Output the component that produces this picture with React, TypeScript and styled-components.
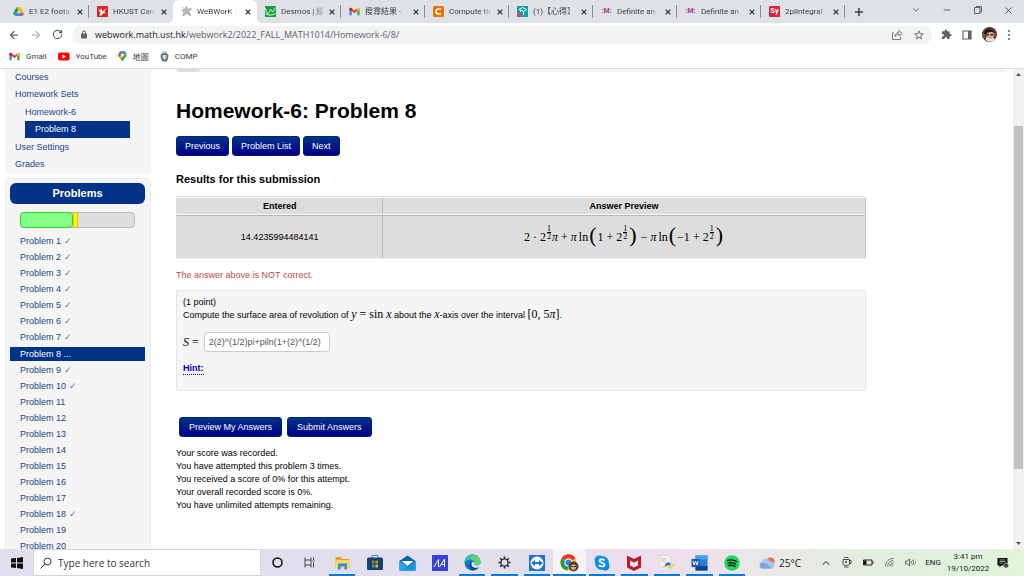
import React from "react";
import styled, { createGlobalStyle, css } from "styled-components";
import { ArrowLeft, ArrowRight, ChevronDown, ChevronUp, Minus, Plus, RotateCw, X } from "lucide-react";
import { MdExtension, MdStarBorder } from "react-icons/md";

const uiFont = `"Open Sans", "Noto Sans CJK TC", sans-serif`;
const smallUiFont = `Roboto, "Noto Sans CJK TC", sans-serif`;
const pageFont = `"Liberation Sans", Arial, sans-serif`;
const mathFont = `"Liberation Serif", "Times New Roman", serif`;

const GlobalStyle = createGlobalStyle`
  * { box-sizing: border-box; }
  body { margin: 0; background: #fff; font-family: ${pageFont}; font-size: 9px; color: #000; }
  button, input { font: inherit; color: inherit; margin: 0; padding: 0; border: 0; background: none; }
  ul { list-style: none; margin: 0; padding: 0; }
  a { color: inherit; text-decoration: none; }
  svg { display: block; flex: none; }
`;

const Screen = styled.div`
  display: flex;
  flex-direction: column;
  height: 100vh;
  overflow: hidden;
`;

/* ---------- browser chrome ---------- */

const TabStrip = styled.div`
  display: flex;
  flex: none;
  height: 23px;
  padding-left: 5px;
  background: #dee1e6;
  font-family: ${smallUiFont};
  font-size: 8px;
  color: #3c4043;
`;

const Tab = styled.div<{ $active?: boolean; $divided?: boolean }>`
  position: relative;
  display: flex;
  align-items: center;
  flex: 0 1 84px;
  min-width: 0;
  padding: 0 5px 0 8px;
  gap: 5px;
  ${(p) =>
    p.$divided &&
    css`
      &::after {
        content: "";
        position: absolute;
        right: 0;
        top: 5px;
        width: 1px;
        height: 13px;
        background: #898c91;
      }
    `}
  ${(p) =>
    p.$active &&
    css`
      background: #fff;
      border-radius: 6px 6px 0 0;
      &::before,
      &::after {
        content: "";
        position: absolute;
        bottom: 0;
        width: 5px;
        height: 5px;
      }
      &::before {
        left: -5px;
        background: radial-gradient(circle at 0 0, transparent 5px, #fff 5px);
      }
      &::after {
        right: -5px;
        background: radial-gradient(circle at 100% 0, transparent 5px, #fff 5px);
      }
    `}
`;

const TabLabel = styled.button`
  flex: 1;
  min-width: 0;
  white-space: nowrap;
  text-align: left;
  line-height: 14px;
  mask-image: linear-gradient(to right, #000 75%, rgba(0, 0, 0, 0.2) 100%);
`;

const IconButton = styled.button`
  display: flex;
  align-items: center;
  justify-content: center;
  flex: none;
`;

const NewTab = styled(IconButton)`
  width: 28px;
`;

const WindowButtons = styled.div`
  display: flex;
  margin-left: auto;
  height: 20px;
`;

const WindowButton = styled(IconButton)`
  width: 31px;
  color: #44474a;
`;

const Toolbar = styled.div`
  display: flex;
  align-items: center;
  flex: none;
  height: 23px;
  padding: 0 13px 0 8px;
  color: #5f6368;
  font-family: ${uiFont};
`;

const NavButtons = styled.div`
  display: flex;
  gap: 10px;
  width: 64px;
`;

const AddressBar = styled.form`
  display: flex;
  align-items: center;
  flex: 1;
  height: 18px;
  padding: 0 7px 0 8px;
  border-radius: 9px;
  background: #f1f3f4;
  font-size: 9px;
`;

const Host = styled.label`
  margin-left: 7px;
  color: #202124;
`;

const PathInput = styled.input`
  flex: 1;
  min-width: 0;
  outline: 0;
`;

const AddressActions = styled.div`
  display: flex;
  gap: 10px;
`;

const ToolbarActions = styled.div`
  display: flex;
  align-items: center;
  gap: 10px;
  padding-left: 9px;
`;

const Bookmarks = styled.nav`
  display: flex;
  align-items: center;
  flex: none;
  gap: 11px;
  height: 23px;
  padding: 0 9px 2px;
  border-bottom: 1px solid #dadce0;
  font-family: ${smallUiFont};
  font-size: 8px;
  color: #3c4043;
`;

const Bookmark = styled.a`
  display: flex;
  align-items: center;
  gap: 6px;
`;

/* ---------- page ---------- */

const Viewport = styled.div`
  display: flex;
  flex: 1;
  min-height: 0;
`;

const Scroller = styled.div`
  display: flex;
  align-items: flex-start;
  flex: 1;
  min-width: 0;
  height: 100%;
  overflow: hidden;
`;

const Sidebar = styled.aside`
  flex: none;
  width: 146px;
  margin-left: 5px;
  color: #1a4590;
`;

const SiteNav = styled.nav`
  padding-right: 21px;
  background: #f5f5f5;
  line-height: 17px;
`;

const NavList = styled.ul<{ $nested?: boolean }>`
  margin: ${(p) => (p.$nested ? "1px 0 1px 10px" : "0")};
`;

const NavLink = styled.a<{ $active?: boolean }>`
  display: block;
  margin-left: ${(p) => (p.$active ? "10px" : "0")};
  padding-left: 10px;
  ${(p) =>
    p.$active &&
    css`
      background: #003388;
      color: #fff;
    `}
`;

const ProblemPanel = styled.section`
  margin-top: 5px;
  padding: 4px 5px 4px 4px;
  border: 1px solid #ececec;
  border-radius: 5px;
  background: #f5f5f5;
`;

const PanelTitle = styled.h2`
  margin: 0;
  border-radius: 6px;
  background: #003388;
  color: #fff;
  font-size: 11px;
  line-height: 21px;
  text-align: center;
`;

const Progress = styled.div`
  display: flex;
  height: 16px;
  margin: 8px 10px 5px;
  border: 1px solid #bbb;
  border-radius: 4px;
  background: #ddd;
`;

const ProgressPart = styled.div<{ $kind: "done" | "tried" }>`
  margin: -1px 0 -1px ${(p) => (p.$kind === "done" ? "-1px" : "0")};
  border: 1px solid ${(p) => (p.$kind === "done" ? "#22e022" : "#ffb000")};
  border-radius: ${(p) => (p.$kind === "done" ? "4px" : "2px")};
  background: ${(p) => (p.$kind === "done" ? "#88ff88" : "#ffff00")};
`;

const ProblemLink = styled.a<{ $active?: boolean }>`
  display: block;
  padding-left: 10px;
  line-height: 16px;
  ${(p) =>
    p.$active &&
    css`
      margin: 2px 0 1px;
      background: #003388;
      color: #fff;
      line-height: 14px;
    `}
`;

const Check = styled.span`
  color: #5a74a6;
`;

const Main = styled.main`
  flex: 1;
  min-width: 0;
  padding: 0 6px 0 25px;
`;

const Breadcrumb = styled.div`
  height: 3px;
  overflow: hidden;
  border-radius: 0 0 4px 4px;
  background: #f5f5f5;
`;

const BreadcrumbToggle = styled.div`
  width: 24px;
  height: 3px;
  border-radius: 0 0 4px 4px;
  background: #dedede;
`;

const Title = styled.h1`
  margin: 27px 0 13px;
  font-size: 21px;
  line-height: 24px;
`;

const ButtonRow = styled.div<{ $gap: number; $inset?: boolean }>`
  display: flex;
  gap: ${(p) => p.$gap}px;
  padding-left: ${(p) => (p.$inset ? "3px" : "0")};
`;

const BlueButton = styled.button<{ $pad: number }>`
  height: 20px;
  padding: 0 ${(p) => p.$pad}px;
  border: 1px solid #00246b;
  border-radius: 3px;
  background: linear-gradient(#003388, #000088);
  color: #fff;
`;

const SectionTitle = styled.h3`
  margin: 16px 0 10px;
  font-size: 11px;
  line-height: 14px;
`;

const ResultTable = styled.table`
  width: 83%;
  border: 1px solid;
  border-color: #e0e0e0 #c4c4c4 #f0f0f0 #e0e0e0;
  border-radius: 2px;
  border-spacing: 0;
  border-collapse: separate;
  background: #ddd;
  text-align: center;

  th {
    height: 18px;
    padding: 0;
    border: solid #fafafa;
    border-width: 1px 0;
  }
  td {
    height: 43px;
    padding: 0;
    border-top: 1px solid #b5b5b5;
  }
  th:first-child,
  td:first-child {
    width: 30%;
    border-right: 1px solid #bbb;
  }
`;

const Warning = styled.p`
  margin: 10px 0 8px;
  color: #b94a48;
  line-height: 13px;
`;

const ProblemBox = styled.section`
  width: 83%;
  min-height: 101px;
  padding: 5px 6px;
  border: 1px solid #e6e6e6;
  border-radius: 2px;
  background: #f5f5f5;
  line-height: 13px;
`;

const Line = styled.p`
  margin: 0;
  line-height: 13px;
`;

const AnswerRow = styled.div`
  display: flex;
  align-items: center;
  gap: 2px;
  margin: 8px 0;
`;

const AnswerInput = styled.input`
  width: 126px;
  height: 20px;
  padding: 0 4px;
  border: 1px solid #ccc;
  border-radius: 3px;
  background: #fff;
  color: #555;
`;

const HintLink = styled.a`
  display: inline-block;
  border-bottom: 1px dotted #0000aa;
  color: #0000aa;
  font-weight: bold;
  line-height: 12px;
`;

const Actions = styled.div`
  margin: 26px 0 10px;
`;

/* ---------- mathematics ---------- */

const MathRow = styled.span`
  display: inline-flex;
  align-items: center;
  height: 24px;
  font-family: ${mathFont};
  font-size: 12px;
  line-height: 14px;
`;

const MathText = styled.span`
  font-family: ${mathFont};
  font-size: 12px;
  line-height: 10px;
`;

const Op = styled.span`
  margin: 0 3px;
`;

const Fn = styled.span`
  margin-left: 2px;
`;

const Delim = styled.span`
  margin: 0 1px;
  padding-bottom: 4px;
  font-size: 22px;
  line-height: 24px;
`;

const FractionPower = styled.sup`
  display: inline-flex;
  flex-direction: column;
  align-items: center;
  align-self: flex-start;
  margin: 0 1px;
  font-size: 8px;
  line-height: 7px;
`;

const Numerator = styled.span`
  border-bottom: 1px solid #000;
`;

const HalfPower = () => (
  <FractionPower>
    <Numerator>1</Numerator>
    <span>2</span>
  </FractionPower>
);

/* ---------- scrollbar ---------- */

const Scrollbar = styled.div`
  display: flex;
  flex-direction: column;
  align-items: center;
  flex: none;
  width: 11px;
  background: #f1f1f1;
`;

const ScrollArrow = styled.div`
  display: flex;
  align-items: center;
  justify-content: center;
  flex: none;
  height: 11px;
`;

const ScrollTrack = styled.div`
  display: flex;
  flex-direction: column;
  flex: 1;
  width: 9px;
`;

const ScrollThumb = styled.div`
  flex: 0 0 75%;
  background: #c1c1c1;
`;

const ScrollLead = styled.div`
  flex: 0 0 10%;
`;

/* ---------- taskbar ---------- */

const Taskbar = styled.footer`
  display: flex;
  flex: none;
  height: 27px;
  background: linear-gradient(to right, #e2dfef 0, #e2deec 50%, #efdfee 66%, #e9e8e6 76%, #e0f0dc 90%, #e2f5da 100%);
  font-family: ${smallUiFont};
  font-size: 8px;
  color: #1a1a1a;
`;

const StartButton = styled(IconButton)`
  width: 33px;
`;

const SearchBox = styled.label`
  display: flex;
  align-items: center;
  flex: 0 1 228px;
  gap: 6px;
  padding: 0 6px;
  border: 1px solid #d5d3dc;
  background: #fff;
`;

const SearchInput = styled.input`
  flex: 1;
  min-width: 0;
  font-family: ${uiFont};
  font-size: 10px;
  outline: 0;
  &::placeholder {
    color: #333;
    opacity: 1;
  }
`;

const Apps = styled.div`
  display: flex;
  flex: 0 1 487px;
`;

const AppButton = styled.button<{ $open?: boolean; $current?: boolean }>`
  position: relative;
  display: flex;
  align-items: center;
  justify-content: center;
  flex: 1;
  background: ${(p) => (p.$current ? "#f6f4f8" : "none")};
  &::after {
    content: "";
    position: absolute;
    bottom: 0;
    left: ${(p) => (p.$current ? "0" : "3px")};
    right: ${(p) => (p.$current ? "0" : "3px")};
    height: 2px;
    background: ${(p) => (p.$open ? "#0a7bd6" : "transparent")};
  }
`;

const Weather = styled.button`
  display: flex;
  align-items: center;
  gap: 4px;
  padding-left: 10px;
  font-family: ${uiFont};
  font-size: 10px;
`;

const Tray = styled.div`
  display: flex;
  margin-left: auto;
  padding-right: 9px;
`;

const TrayButton = styled(IconButton)<{ $w: number }>`
  width: ${(p) => p.$w}px;
`;

const Clock = styled.button`
  width: 46px;
  line-height: 12px;
  white-space: nowrap;
  text-align: center;
`;

/* ---------- drawings ---------- */

const DriveIcon = () => (
  <svg width="11" height="11" viewBox="0 0 24 24">
    <path d="M8 2h8l8 14h-8z" fill="#fbbc04" />
    <path d="M8 2l4 7L4 22 0 16z" fill="#1da462" />
    <path d="M8 16h16l-4 6H4z" fill="#4285f4" />
    <path d="M20 22l-4-6h8z" fill="#ea4335" />
  </svg>
);

const CanvasIcon = () => (
  <svg width="11" height="11" viewBox="0 0 22 22">
    <path d="M0 0h22v22H0z" fill="#dc2626" />
    <path d="M2 5l5 4 1-5 3 7 8-7-5 8 4 2-6 1-3 4H4l3-5z" fill="#fff" />
  </svg>
);

const WebworkIcon = () => (
  <svg width="11" height="11" viewBox="0 0 22 22" fill="none" stroke="#8d8b78" strokeWidth="1.4">
    <path d="M11 1l2 6 8-1-6 5 4 8-8-5-6 6 1-8-5-4 7 0z" fill="#d8d5c2" />
    <path d="M3 2l16 18M19 4L3 18" />
  </svg>
);

const DesmosIcon = () => (
  <svg width="11" height="11" viewBox="0 0 22 22" fill="none">
    <path d="M0 0h22v22H0z" fill="#11a03c" />
    <path d="M1 4c2 13 5 14 8 7s4-3 5 0 4 0 6-8M1 15c5 4 14 4 20 0" stroke="#fff" strokeWidth="1.8" />
  </svg>
);

const GmailIcon = () => (
  <svg width="11" height="11" viewBox="0 0 24 24">
    <path d="M1 5v15h5V10z" fill="#4285f4" />
    <path d="M23 5v15h-5V10z" fill="#34a853" />
    <path d="M1 6c0-3 3-3 5-1l6 5 6-5v6l-6 5-6-5z" fill="#ea4335" />
    <path d="M18 5c2-2 5-2 5 1v3l-5 3z" fill="#fbbc04" />
    <path d="M1 6v3l5 3V5C4 3 1 3 1 6z" fill="#c5221f" />
  </svg>
);

const CheggIcon = () => (
  <svg width="11" height="11" viewBox="0 0 22 22" fill="none">
    <rect width="22" height="22" rx="3" fill="#eb7100" />
    <path d="M16 6h-5a5 5 0 0 0 0 10h5" stroke="#fff" strokeWidth="3" />
  </svg>
);

const BahaIcon = () => (
  <svg width="11" height="11" viewBox="0 0 22 22" fill="none">
    <path d="M0 0h22v22H0z" fill="#12a0ad" />
    <path d="M4 7l7-4 8 4-6 4zM13 10v8M7 8v4" stroke="#fff" strokeWidth="2" />
    <circle cx="4" cy="18" r="4" fill="#ef3b3b" />
  </svg>
);

const BrandGlyph = styled.span<{ $solid?: boolean }>`
  width: 11px;
  flex: none;
  border-radius: 1px;
  background: ${(p) => (p.$solid ? "#dc2240" : "none")};
  color: ${(p) => (p.$solid ? "#fff" : "#a8329a")};
  font-size: 7px;
  font-weight: bold;
  line-height: 11px;
  text-align: center;
`;

const YoutubeIcon = () => (
  <svg width="12" height="11" viewBox="0 0 24 22">
    <rect y="3" width="23" height="16" rx="4" fill="#f00" />
    <path d="M9 7l7 4-7 4z" fill="#fff" />
  </svg>
);

const MapsIcon = () => (
  <svg width="9" height="11" viewBox="0 0 18 22">
    <path d="M9 0a8 8 0 0 1 8 8c0 5-6 7-8 14C7 15 1 13 1 8a8 8 0 0 1 8-8z" fill="#34a853" />
    <path d="M9 0a8 8 0 0 1 7 4L6 16 1 9z" fill="#fbbc04" />
    <path d="M9 0a8 8 0 0 1 7 4l-6 6-7-7a8 8 0 0 1 6-3z" fill="#4285f4" />
    <path d="M3 3l5 4-6 5C0 9 1 5 3 3z" fill="#ea4335" />
    <circle cx="9" cy="8" r="3" fill="#fff" />
  </svg>
);

const CrestIcon = () => (
  <svg width="9" height="11" viewBox="0 0 18 22" fill="none">
    <path d="M5 1h8v3l4 4-1 8-3 5H5l-3-5-1-8 4-4z" fill="#5c7896" />
    <path d="M5 8h8v6l-4 4-4-4z" fill="#d8c690" />
    <path d="M9 8v8M6 3h6" stroke="#fff" strokeWidth="1.5" />
  </svg>
);

const LockIcon = () => (
  <svg width="8" height="9" viewBox="0 0 16 18" fill="none">
    <rect x="2" y="7" width="12" height="10" rx="1.5" fill="#5f6368" />
    <path d="M5 8V5a3 3 0 0 1 6 0v3" stroke="#5f6368" strokeWidth="2" />
  </svg>
);

const ShareIcon = () => (
  <svg width="11" height="11" viewBox="0 0 22 22" fill="none" stroke="#5f6368" strokeWidth="1.7">
    <path d="M4 8H1v13h16v-5M6 15c0-5 4-8 8-8V3l6 6-6 5v-4c-4 0-6 2-8 5z" />
  </svg>
);

const SidePanelIcon = () => (
  <svg width="10" height="10" viewBox="0 0 20 20">
    <path d="M2 2h16v16H2z" fill="none" stroke="#5f6368" strokeWidth="2.4" />
    <path d="M12 2h6v16h-6z" fill="#5f6368" />
  </svg>
);

const AvatarIcon = () => (
  <svg width="15" height="15" viewBox="0 0 30 30">
    <circle cx="15" cy="15" r="15" fill="#54372b" />
    <path d="M8 14c2-7 14-7 17 0l-2 8-7 4-7-6z" fill="#d6a283" />
    <path d="M4 12c2-9 18-10 21 0l-5-3-8 2-5 4z" fill="#1c1414" />
    <path d="M8 14h6v3H8zM17 14h6v3h-6z" fill="#403334" />
    <path d="M9 20l7 4 6-3 4 4c-5 6-14 6-19 0z" fill="#e4e3e8" />
    <path d="M0 14h6v7H1zM25 13h5l-1 7h-4z" fill="#98513c" />
  </svg>
);

const DotsIcon = () => (
  <svg width="4" height="12" viewBox="0 0 4 12" fill="#5f6368">
    <circle cx="2" cy="2" r="1" />
    <circle cx="2" cy="6" r="1" />
    <circle cx="2" cy="10" r="1" />
  </svg>
);

const RestoreIcon = () => (
  <svg width="8" height="8" viewBox="0 0 16 16" fill="none" stroke="currentColor" strokeWidth="1.6">
    <path d="M1 3h11v12H1zM4 3V1h11v11h-3" />
  </svg>
);

const WindowsLogo = () => (
  <svg width="12" height="12" viewBox="0 0 24 24" fill="#111">
    <path d="M0 3l10-1v9H0zM12 2l12-2v11H12zM0 13h10v9L0 21zM12 13h12v11l-12-2z" />
  </svg>
);

const SearchIcon = () => (
  <svg width="12" height="12" viewBox="0 0 24 24" fill="none" stroke="#222" strokeWidth="1.8">
    <circle cx="15" cy="9" r="7" />
    <path d="M10 14l-9 9" />
  </svg>
);

const CortanaIcon = () => (
  <svg width="11" height="11" viewBox="0 0 22 22">
    <circle cx="11" cy="11" r="9" fill="none" stroke="#111" strokeWidth="3" />
  </svg>
);

const TaskViewIcon = () => (
  <svg width="11" height="11" viewBox="0 0 22 22" fill="none" stroke="#222" strokeWidth="1.6">
    <path d="M2 1v5h12V1M2 21v-5h12v5M2 6v10M14 6v10M19 1v5M19 11v10M17 8h4" />
  </svg>
);

const FolderIcon = () => (
  <svg width="15" height="14" viewBox="0 0 30 28">
    <path d="M1 2h10l3 4h15v18H1z" fill="#e8a618" />
    <path d="M1 8h28v16H1z" fill="#ffd766" />
    <path d="M6 27V15h18v12h-5v-6h-8v6z" fill="#2c8fdc" />
  </svg>
);

const StoreIcon = () => (
  <svg width="16" height="17" viewBox="0 0 32 34">
    <path d="M10 8V3h12v5" fill="none" stroke="#2f9bdc" strokeWidth="2" />
    <rect y="7" width="32" height="25" rx="3" fill="#15416c" />
    <path d="M10 13h5v6h-5z" fill="#f25022" />
    <path d="M17 13h5v6h-5z" fill="#7fba00" />
    <path d="M10 21h5v6h-5z" fill="#00a4ef" />
    <path d="M17 21h5v6h-5z" fill="#ffb900" />
  </svg>
);

const MailIcon = () => (
  <svg width="17" height="16" viewBox="0 0 34 32">
    <path d="M1 12L17 1l16 11v19H1z" fill="#0a62ad" />
    <path d="M5 12h24l-12 10z" fill="#fff" />
    <path d="M1 12l16 11 16-11v19H1z" fill="#28a8ea" />
    <path d="M1 31l16-8 16-11v19z" fill="#1389d3" opacity=".6" />
  </svg>
);

const MyAsusIcon = () => (
  <svg width="16" height="16" viewBox="0 0 32 32" fill="none">
    <path d="M0 0h32v32H0z" fill="#3a3fdc" />
    <path d="M4 24l9-15v15M15 24l10-16v16M19 19h6" stroke="#fff" strokeWidth="2" />
  </svg>
);

const EdgeIcon = () => (
  <svg width="17" height="17" viewBox="0 0 34 34">
    <circle cx="17" cy="17" r="16" fill="#1474c4" />
    <path d="M1 17C1 7 9 1 17 1c10 0 16 7 16 14 0 6-5 8-9 8-4-1-4-3-3-5 1-7-11-11-20-1z" fill="#39c0b2" />
    <path d="M18 1c9 0 15 7 15 14 0 6-5 8-9 8-4-1-4-3-3-5 1-3-2-7-8-8z" fill="#62cf73" />
    <path d="M15 16c-3 8 4 14 13 11-2 4-7 6-11 6-7-4-9-12-2-17z" fill="#0c4c91" />
    <path d="M21 18c-1 2-1 4 3 5 3 0 6-1 8-3l1 4-5 3c-10 3-16-5-11-12z" fill="#e8e4f0" />
  </svg>
);

const GearIcon = () => (
  <svg width="13" height="13" viewBox="0 0 26 26" fill="none" stroke="#2a2a2a">
    <circle cx="13" cy="13" r="7" strokeWidth="2.4" />
    <path d="M13 1v5M13 20v5M1 13h5M20 13h5M4.5 4.5L8 8M18 18l3.500 3.500M21.500 4.500L18 8M8 18l-3.500 3.500" strokeWidth="3.400" />
  </svg>
);

const TeamViewerIcon = () => (
  <svg width="16" height="16" viewBox="0 0 32 32">
    <path d="M0 0h32v32H0z" fill="#1676d6" />
    <circle cx="16" cy="16" r="13" fill="#fff" />
    <path d="M4 16l8-6v4h8v-4l8 6-8 6v-4h-8v4z" fill="#1676d6" />
  </svg>
);

const ChromeIcon = () => (
  <svg width="19" height="18" viewBox="0 0 38 36">
    <circle cx="17" cy="17" r="16" fill="#fbc116" />
    <path d="M17 17L3 9a16 16 0 0 1 28 0z" fill="#e33b2e" />
    <path d="M17 17L3 9a16 16 0 0 0 12 24z" fill="#229f4c" />
    <circle cx="17" cy="17" r="8" fill="#fff" />
    <circle cx="17" cy="17" r="6" fill="#3a7ce8" />
    <circle cx="27" cy="25" r="10" fill="#523a30" />
    <path d="M21 24c2-4 10-4 12 0l-2 6-5 3-4-4z" fill="#cfa68c" />
    <path d="M22 24h4v2h-4zM28 24h4v2h-4z" fill="#322624" />
  </svg>
);

const SkypeIcon = () => (
  <svg width="16" height="16" viewBox="0 0 32 32" fill="none">
    <circle cx="10" cy="10" r="9" fill="#0a9be8" />
    <circle cx="22" cy="22" r="9" fill="#0a7fd8" />
    <circle cx="16" cy="16" r="14" fill="#0a92e2" />
    <path d="M21 11c-2-3-10-3-10 1 0 5 10 2 10 8 0 4-8 4-11 0" stroke="#fff" strokeWidth="3.400" />
  </svg>
);

const McAfeeIcon = () => (
  <svg width="14" height="16" viewBox="0 0 28 32">
    <path d="M0 1l14 7 14-7v24l-14 7-14-7z" fill="#b81c2c" />
    <path d="M6 11l8 4 8-4v10l-8 4-8-4z" fill="#eadce8" />
  </svg>
);

const PythonFileIcon = () => (
  <svg width="16" height="16" viewBox="0 0 32 32">
    <path d="M2 1h17l6 6v23H2z" fill="#f3f2f2" stroke="#c5c3c8" />
    <path d="M5 8h10M5 12h8M5 24h9" stroke="#bbb" strokeWidth="2" />
    <path d="M13 18c0-3 8-5 10-2v5h-7c-2 0-3 3-5 2z" fill="#3474ab" />
    <path d="M30 18c2 3 0 6-2 6h-4c0 4-7 5-8 1l1-3h7c2 0 3-2 3-5z" fill="#f9cc3f" />
  </svg>
);

const WordIcon = () => (
  <svg width="17" height="16" viewBox="0 0 34 32" fill="none">
    <path d="M9 1h24v30H9z" fill="#2b7cd3" />
    <path d="M9 1h24v8H9z" fill="#41a5ee" />
    <path d="M9 22h24v9H9z" fill="#103f91" />
    <path d="M1 8h16v16H1z" fill="#185abd" />
    <path d="M4 12l2 8 3-7 3 7 2-8" stroke="#fff" strokeWidth="2" />
  </svg>
);

const SpotifyIcon = () => (
  <svg width="16" height="16" viewBox="0 0 32 32" fill="none" strokeLinecap="round">
    <circle cx="16" cy="16" r="15.500" fill="#1ed760" />
    <path d="M7 11c6-2 13-1 18 2M8 16c6-2 11-1 15 2M9 21c5-1 9-1 13 2" stroke="#111" strokeWidth="2.600" />
  </svg>
);

const WeatherIcon = () => (
  <svg width="17" height="12" viewBox="0 0 34 24">
    <circle cx="25" cy="9" r="8" fill="#ee6b4d" />
    <path d="M7 23a7 7 0 0 1 0-13C9 1 22 1 24 9c9-1 12 11 4 14z" fill="#a9c9ef" />
    <path d="M7 23a7 7 0 0 1 0-12c6-1 16 5 20 12z" fill="#7da9e2" />
  </svg>
);

const MeetIcon = () => (
  <svg width="10" height="11" viewBox="0 0 20 22" fill="none" stroke="#222" strokeWidth="1.500">
    <path d="M4 1h9M2 5h13v9c0 4-13 4-13 0zM15 7h3v6h-3M4 20h9" />
    <circle cx="8" cy="10" r="1.500" />
  </svg>
);

const BatteryIcon = () => (
  <svg width="11" height="7" viewBox="0 0 22 14" fill="none">
    <path d="M1 2h17v10H1zM20 5v4" stroke="#111" strokeWidth="1.800" />
    <path d="M2 3h5v8H2z" fill="#111" />
  </svg>
);

const WifiIcon = () => (
  <svg width="9" height="9" viewBox="0 0 20 20" fill="none" stroke="#444" strokeWidth="1.600">
    <path d="M1 19C1 8 9 1 19 1M6 19C6 11 12 6 19 6M11 19c0-5 4-8 8-8M15 19c0-2 2-4 4-4" />
  </svg>
);

const VolumeIcon = () => (
  <svg width="11" height="9" viewBox="0 0 24 20" fill="none" stroke="#222" strokeWidth="1.500">
    <path d="M1 7h4l5-5v16l-5-5H1zM13 7c2 2 2 4 0 6M16 4c4 4 4 8 0 12" />
    <path d="M20 2c4 5 4 11 0 16" stroke="#999" />
  </svg>
);

const NoticeIcon = () => (
  <svg width="12" height="12" viewBox="0 0 24 24">
    <path d="M1 2h20v15H9l-4 4v-4H1z" fill="#111" />
    <path d="M5 6h12M5 9h12M5 12h7" stroke="#e2f5da" strokeWidth="1.200" />
    <circle cx="18" cy="17" r="5" fill="#444" stroke="#e2f5da" />
  </svg>
);

/* ---------- data ---------- */

type TabInfo = { label: string; icon: React.ReactNode; active?: boolean; divided?: boolean };

const tabs: TabInfo[] = [
  { label: "E1 E2 foota", icon: <DriveIcon />, divided: true },
  { label: "HKUST Can", icon: <CanvasIcon /> },
  { label: "WeBWorK :", icon: <WebworkIcon />, active: true },
  { label: "Desmos | 繪", icon: <DesmosIcon />, divided: true },
  { label: "搜尋結果 -", icon: <GmailIcon />, divided: true },
  { label: "Compute th", icon: <CheggIcon />, divided: true },
  { label: "(1)【心得】", icon: <BahaIcon />, divided: true },
  { label: "Definite an", icon: <BrandGlyph>:M:</BrandGlyph>, divided: true },
  { label: "Definite an", icon: <BrandGlyph>:M:</BrandGlyph>, divided: true },
  { label: "2piintegral", icon: <BrandGlyph $solid>Sy</BrandGlyph>, divided: true },
];

const solved = new Set([1, 2, 3, 4, 5, 6, 7, 9, 10, 18]);
const problems = Array.from({ length: 20 }, (_, i) => i + 1);

const apps: { name: string; icon: React.ReactNode; open?: boolean; current?: boolean }[] = [
  { name: "Cortana", icon: <CortanaIcon /> },
  { name: "Task view", icon: <TaskViewIcon /> },
  { name: "File Explorer", icon: <FolderIcon />, open: true },
  { name: "Store", icon: <StoreIcon /> },
  { name: "Mail", icon: <MailIcon /> },
  { name: "MyASUS", icon: <MyAsusIcon /> },
  { name: "Edge", icon: <EdgeIcon />, open: true },
  { name: "Settings", icon: <GearIcon />, open: true },
  { name: "TeamViewer", icon: <TeamViewerIcon />, open: true },
  { name: "Chrome", icon: <ChromeIcon />, open: true, current: true },
  { name: "Skype", icon: <SkypeIcon />, open: true },
  { name: "McAfee", icon: <McAfeeIcon />, open: true },
  { name: "Python", icon: <PythonFileIcon />, open: true },
  { name: "Word", icon: <WordIcon />, open: true },
  { name: "Spotify", icon: <SpotifyIcon />, open: true },
];

const messages = [
  "Your score was recorded.",
  "You have attempted this problem 3 times.",
  "You received a score of 0% for this attempt.",
  "Your overall recorded score is 0%.",
  "You have unlimited attempts remaining.",
];

export default function App() {
  return (
    <Screen>
      <GlobalStyle />
      <TabStrip>
        {tabs.map((t, i) => (
          <Tab key={i} $active={t.active} $divided={t.divided}>
            {t.icon}
            <TabLabel type="button">{t.label}</TabLabel>
            <IconButton type="button" aria-label="Close tab">
              <X size={8} strokeWidth={3.5} />
            </IconButton>
          </Tab>
        ))}
        <NewTab type="button" aria-label="New tab">
          <Plus size={12} strokeWidth={3} />
        </NewTab>
        <WindowButtons>
          <WindowButton type="button" aria-label="Search tabs">
            <ChevronDown size={10} />
          </WindowButton>
          <WindowButton type="button" aria-label="Minimize">
            <Minus size={10} />
          </WindowButton>
          <WindowButton type="button" aria-label="Restore">
            <RestoreIcon />
          </WindowButton>
          <WindowButton type="button" aria-label="Close">
            <X size={11} strokeWidth={2} />
          </WindowButton>
        </WindowButtons>
      </TabStrip>

      <Toolbar>
        <NavButtons>
          <IconButton type="button" aria-label="Back">
            <ArrowLeft size={12} strokeWidth={2.5} />
          </IconButton>
          <IconButton type="button" aria-label="Forward">
            <ArrowRight size={12} color="#b5b8bb" strokeWidth={2.5} />
          </IconButton>
          <IconButton type="button" aria-label="Reload">
            <RotateCw size={11} strokeWidth={2.5} />
          </IconButton>
        </NavButtons>
        <AddressBar>
          <LockIcon />
          <Host htmlFor="address">webwork.math.ust.hk</Host>
          <PathInput id="address" defaultValue="/webwork2/2022_FALL_MATH1014/Homework-6/8/" />
          <AddressActions>
            <IconButton type="button" aria-label="Share">
              <ShareIcon />
            </IconButton>
            <IconButton type="button" aria-label="Bookmark">
              <MdStarBorder size={12} />
            </IconButton>
          </AddressActions>
        </AddressBar>
        <ToolbarActions>
          <IconButton type="button" aria-label="Extensions">
            <MdExtension size={11} />
          </IconButton>
          <IconButton type="button" aria-label="Side panel">
            <SidePanelIcon />
          </IconButton>
          <IconButton type="button" aria-label="Profile">
            <AvatarIcon />
          </IconButton>
          <IconButton type="button" aria-label="Menu">
            <DotsIcon />
          </IconButton>
        </ToolbarActions>
      </Toolbar>

      <Bookmarks>
        <Bookmark href="#gmail">
          <GmailIcon />
          Gmail
        </Bookmark>
        <Bookmark href="#youtube">
          <YoutubeIcon />
          YouTube
        </Bookmark>
        <Bookmark href="#maps">
          <MapsIcon />
          地圖
        </Bookmark>
        <Bookmark href="#comp">
          <CrestIcon />
          COMP
        </Bookmark>
      </Bookmarks>

      <Viewport>
        <Scroller>
          <Sidebar>
            <SiteNav>
              <NavList>
                <li>
                  <NavLink href="#courses">Courses</NavLink>
                </li>
                <li>
                  <NavLink href="#sets">Homework Sets</NavLink>
                  <NavList $nested>
                    <li>
                      <NavLink href="#hw6">Homework-6</NavLink>
                    </li>
                    <li>
                      <NavLink href="#p8" $active>
                        Problem 8
                      </NavLink>
                    </li>
                  </NavList>
                </li>
                <li>
                  <NavLink href="#settings">User Settings</NavLink>
                </li>
                <li>
                  <NavLink href="#grades">Grades</NavLink>
                </li>
              </NavList>
            </SiteNav>
            <ProblemPanel>
              <PanelTitle>Problems</PanelTitle>
              <Progress>
                <ProgressPart $kind="done" style={{ width: "47%" }} />
                <ProgressPart $kind="tried" style={{ width: "4%" }} />
              </Progress>
              <ul>
                {problems.map((n) => (
                  <li key={n}>
                    <ProblemLink href={`#problem-${n}`} $active={n === 8}>
                      Problem {n}
                      {n === 8 && " ..."}
                      {solved.has(n) && <Check> ✓</Check>}
                    </ProblemLink>
                  </li>
                ))}
              </ul>
            </ProblemPanel>
          </Sidebar>

          <Main>
            <Breadcrumb>
              <BreadcrumbToggle />
            </Breadcrumb>
            <Title>Homework-6: Problem 8</Title>
            <ButtonRow $gap={3}>
              <BlueButton $pad={8} type="button">
                Previous
              </BlueButton>
              <BlueButton $pad={8} type="button">
                Problem List
              </BlueButton>
              <BlueButton $pad={8} type="button">
                Next
              </BlueButton>
            </ButtonRow>
            <SectionTitle>Results for this submission</SectionTitle>
            <ResultTable>
              <thead>
                <tr>
                  <th>Entered</th>
                  <th>Answer Preview</th>
                </tr>
              </thead>
              <tbody>
                <tr>
                  <td>14.4235994484141</td>
                  <td>
                    <MathRow>
                      2<Op>·</Op>2<HalfPower />
                      <i>π</i>
                      <Op>+</Op>
                      <i>π</i>
                      <Fn>ln</Fn>
                      <Delim>(</Delim>1<Op>+</Op>2<HalfPower />
                      <Delim>)</Delim>
                      <Op>−</Op>
                      <i>π</i>
                      <Fn>ln</Fn>
                      <Delim>(</Delim>−1<Op>+</Op>2<HalfPower />
                      <Delim>)</Delim>
                    </MathRow>
                  </td>
                </tr>
              </tbody>
            </ResultTable>
            <Warning>The answer above is NOT correct.</Warning>
            <ProblemBox>
              <Line>(1 point)</Line>
              <Line>
                Compute the surface area of revolution of{" "}
                <MathText>
                  <i>y</i>
                  <Op>=</Op>sin <i>x</i>
                </MathText>{" "}
                about the{" "}
                <MathText>
                  <i>x</i>
                </MathText>
                -axis over the interval{" "}
                <MathText>
                  [0, 5<i>π</i>]
                </MathText>
                .
              </Line>
              <AnswerRow>
                <label htmlFor="answer">
                  <MathRow>
                    <i>S</i>
                    <Op>=</Op>
                  </MathRow>
                </label>
                <AnswerInput id="answer" defaultValue="2(2)^(1/2)pi+piln(1+(2)^(1/2)" />
              </AnswerRow>
              <HintLink href="#hint">Hint:</HintLink>
            </ProblemBox>
            <Actions>
              <ButtonRow $gap={5} $inset>
                <BlueButton $pad={9} type="button">
                  Preview My Answers
                </BlueButton>
                <BlueButton $pad={9} type="button">
                  Submit Answers
                </BlueButton>
              </ButtonRow>
            </Actions>
            {messages.map((m) => (
              <Line key={m}>{m}</Line>
            ))}
          </Main>
        </Scroller>
        <Scrollbar>
          <ScrollArrow>
            <svg width="5" height="3" viewBox="0 0 5 3">
              <path d="M0 3l2.500-3L5 3z" fill="#505050" />
            </svg>
          </ScrollArrow>
          <ScrollTrack>
            <ScrollLead />
            <ScrollThumb />
          </ScrollTrack>
          <ScrollArrow>
            <svg width="5" height="3" viewBox="0 0 5 3">
              <path d="M0 0l2.500 3L5 0z" fill="#505050" />
            </svg>
          </ScrollArrow>
        </Scrollbar>
      </Viewport>

      <Taskbar>
        <StartButton type="button" aria-label="Start">
          <WindowsLogo />
        </StartButton>
        <SearchBox>
          <SearchIcon />
          <SearchInput placeholder="Type here to search" aria-label="Search" />
        </SearchBox>
        <Apps>
          {apps.map((a) => (
            <AppButton key={a.name} type="button" aria-label={a.name} $open={a.open} $current={a.current}>
              {a.icon}
            </AppButton>
          ))}
        </Apps>
        <Weather type="button">
          <WeatherIcon />
          25°C
        </Weather>
        <Tray>
          <TrayButton $w={21} type="button" aria-label="Hidden icons">
            <ChevronUp size={12} strokeWidth={2} />
          </TrayButton>
          <TrayButton $w={22} type="button" aria-label="Meet now">
            <MeetIcon />
          </TrayButton>
          <TrayButton $w={21} type="button" aria-label="Battery">
            <BatteryIcon />
          </TrayButton>
          <TrayButton $w={21} type="button" aria-label="Network">
            <WifiIcon />
          </TrayButton>
          <TrayButton $w={21} type="button" aria-label="Volume">
            <VolumeIcon />
          </TrayButton>
          <TrayButton $w={24} type="button">
            ENG
          </TrayButton>
          <Clock type="button">
            3:41 pm
            <br />
            19/10/2022
          </Clock>
          <TrayButton $w={24} type="button" aria-label="Notifications">
            <NoticeIcon />
          </TrayButton>
        </Tray>
      </Taskbar>
    </Screen>
  );
}
